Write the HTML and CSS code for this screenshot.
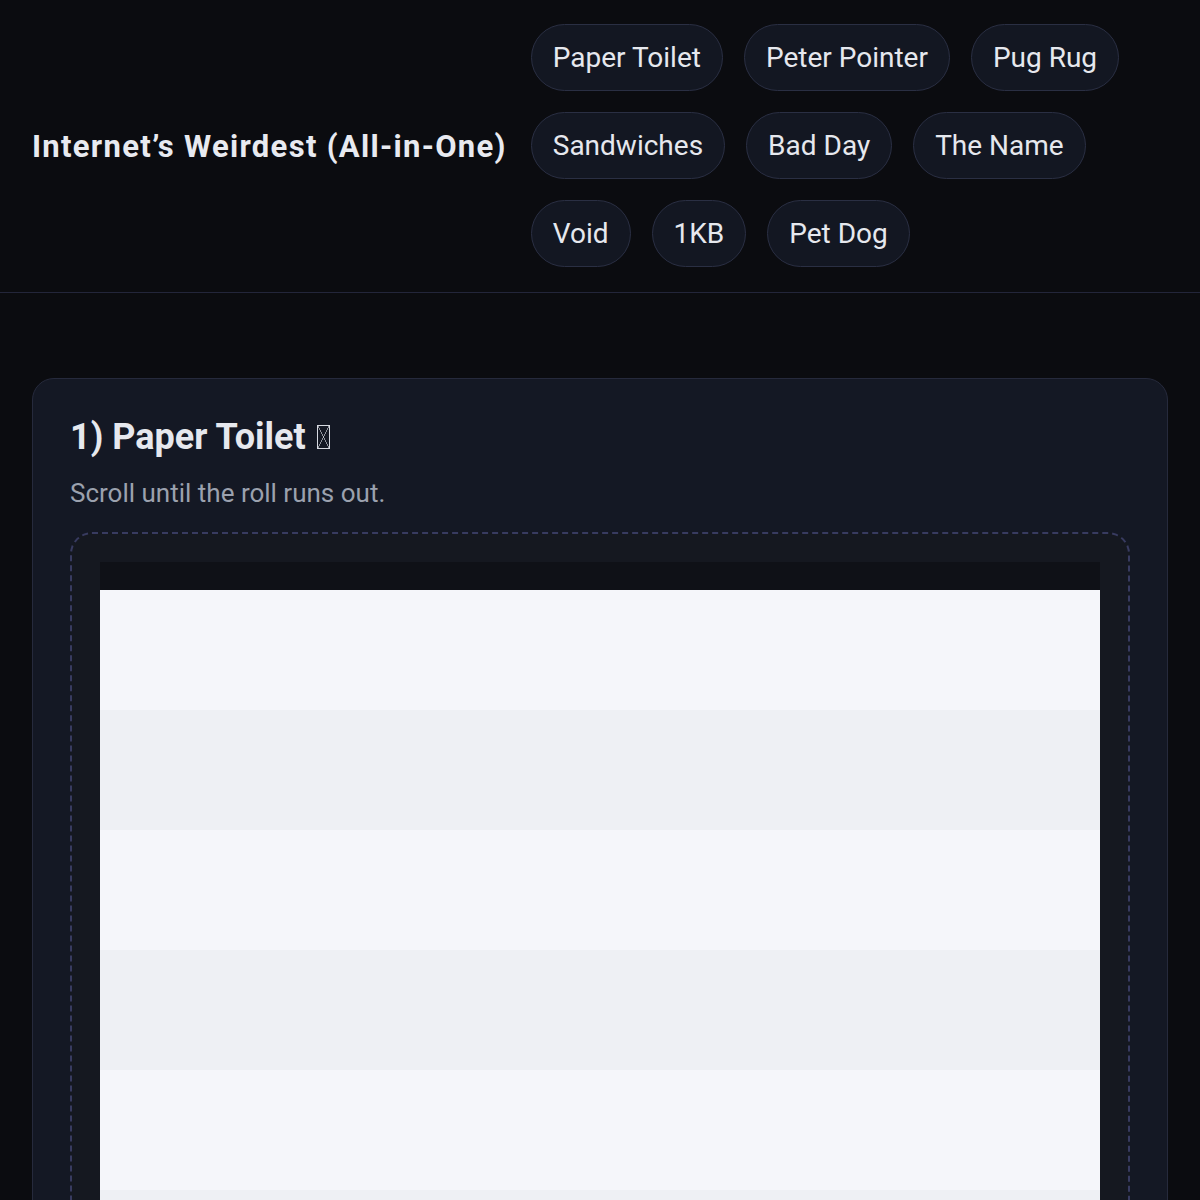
FILE: index.html
```html
<!DOCTYPE html>
<html lang="en">
<head>
<meta charset="utf-8">
<title>Internet’s Weirdest (All-in-One)</title>
<link rel="stylesheet" href="styles.css">
</head>
<body>
<header class="topbar">
  <h1 class="brand">Internet’s Weirdest (All-in-One)</h1>
  <nav class="pills">
    <a class="pill" href="#paper">Paper Toilet</a>
    <a class="pill" href="#peter">Peter Pointer</a>
    <a class="pill" href="#pug">Pug Rug</a>
    <a class="pill" href="#sandwiches">Sandwiches</a>
    <a class="pill" href="#badday">Bad Day</a>
    <a class="pill" href="#name">The Name</a>
    <a class="pill" href="#void">Void</a>
    <a class="pill" href="#1kb">1KB</a>
    <a class="pill" href="#dog">Pet Dog</a>
  </nav>
</header>
<main class="content">
  <section class="card" id="paper">
    <h2 class="card-title">1) Paper Toilet <span class="tofu">🧻</span></h2>
    <p class="card-sub">Scroll until the roll runs out.</p>
    <div class="stage">
      <div class="roll">
        <div class="sheet"></div>
        <div class="sheet alt"></div>
        <div class="sheet"></div>
        <div class="sheet alt"></div>
        <div class="sheet"></div>
        <div class="sheet alt"></div>
        <div class="sheet"></div>
      </div>
    </div>
  </section>
</main>
</body>
</html>
```

FILE: styles.css
```css
* { box-sizing: border-box; }
html, body { margin: 0; padding: 0; }
body {
  background: #0b0c10;
  color: #e6e8ee;
  font-family: Roboto, "Noto Sans", "DejaVu Sans", sans-serif;
}
.topbar {
  display: flex;
  align-items: center;
  gap: 24px;
  padding: 24px 32px 25px;
  border-bottom: 1px solid #23263a;
}
.brand {
  margin: 0;
  font-size: 31px;
  line-height: 36px;
  font-weight: 700;
  letter-spacing: 1.3px;
  color: #e8eaf0;
  white-space: nowrap;
  padding-top: 3px;
}
.pills {
  flex: 1;
  display: flex;
  flex-wrap: wrap;
  gap: 21px 21px;
}
.pill {
  display: inline-block;
  height: 67px;
  line-height: 65px;
  padding: 0 21px;
  border: 1px solid #2a2f43;
  border-radius: 34px;
  background: #131722;
  color: #e6e8ee;
  font-size: 28px;
  text-decoration: none;
}
.content {
  padding: 85px 32px 40px;
}
.card {
  background: #141824;
  border: 1px solid #262a3c;
  border-radius: 22px;
  padding: 36px 37px 36px;
}
.card-title {
  margin: 0;
  font-size: 36px;
  font-weight: 700;
  line-height: 44px;
  color: #e6e8ee;
}
.tofu {
  display: inline-block;
  width: 13px;
  height: 24px;
  margin-left: 2px;
  border: 1px solid #d6d9e1;
  vertical-align: baseline;
  overflow: hidden;
  color: transparent;
  font-size: 8px;
  line-height: 8px;
  background:
    linear-gradient(to top right, transparent calc(50% - 0.6px), #d6d9e1 50%, transparent calc(50% + 0.6px)),
    linear-gradient(to bottom right, transparent calc(50% - 0.6px), #d6d9e1 50%, transparent calc(50% + 0.6px));
}
.card-sub {
  margin: 16px 0 0;
  font-size: 26px;
  line-height: 36px;
  color: #9ba1ae;
}
.stage {
  margin-top: 21px;
  border: 2px dashed #383b60;
  border-radius: 22px;
  background: #151820;
  padding: 28px;
}
.roll {
  background: #0f1117;
  padding-top: 28px;
}
.sheet {
  height: 120px;
  background: #f5f6fa;
}
.sheet.alt {
  background: #eef0f4;
}
```
